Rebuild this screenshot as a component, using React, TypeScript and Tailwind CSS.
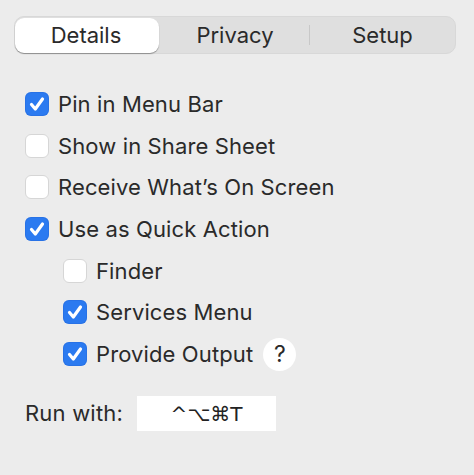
import { ReactNode } from "react";

function Check({ checked }: { checked?: boolean }) {
    if (checked) {
        return (
            <span className="flex h-[24px] w-[24px] shrink-0 items-center justify-center rounded-[6px] bg-[#2b7af0] shadow-[inset_0_0_0_1px_rgba(30,90,200,0.25)]">
                <svg width="18" height="18" viewBox="0 0 18 18" fill="none">
                    <path d="M3.5 9.5L7.3 14L14.5 4" stroke="white" strokeWidth="3.2" strokeLinecap="round" strokeLinejoin="round" />
                </svg>
            </span>
        );
    }
    return <span className="h-[24px] w-[24px] shrink-0 rounded-[6px] border border-[#d6d6d6] bg-white" />;
}

function Row({ checked, indent, children }: { checked?: boolean; indent?: boolean; children: ReactNode }) {
    return (
        <div className={indent ? "flex h-[24px] items-center gap-[9px] pl-[38px]" : "flex h-[24px] items-center gap-[9px]"}>
            <Check checked={checked} />
            <span className="text-[22px] leading-none tracking-[0.12px] whitespace-nowrap">{children}</span>
        </div>
    );
}

export default function App() {
    return (
        <div className="h-[475px] w-[474px] overflow-hidden bg-[#ececec] pt-[16px] pl-[14px] font-['Inter',sans-serif] text-[#2a2a2a]">
            <div className="flex h-[38px] w-[442px] items-center rounded-[10px] border border-[#d8d8d8] bg-[#dfdfdf] text-[22px]">
                <div className="flex h-[35px] w-[144px] items-center justify-center rounded-[9px] bg-white pr-[2px] shadow-[0_1px_1px_rgba(0,0,0,0.35)]">Details</div>
                <div className="flex h-[35px] w-[150px] items-center justify-center pl-[2px]">Privacy</div>
                <div className="h-[20px] w-[1px] bg-[#c8c8c8]" />
                <div className="flex h-[35px] flex-1 items-center justify-center">Setup</div>
            </div>
            <div className="mt-[38px] flex flex-col gap-[17.7px] pl-[11px]">
                <Row checked>Pin in Menu Bar</Row>
                <Row>Show in Share Sheet</Row>
                <Row>Receive What’s On Screen</Row>
                <Row checked>Use as Quick Action</Row>
                <Row indent>Finder</Row>
                <Row checked indent>Services Menu</Row>
                <div className="flex items-center gap-[10px]">
                    <Row checked indent>Provide Output</Row>
                    <span className="my-[-5px] flex h-[33px] w-[33px] items-center justify-center rounded-full bg-white text-[23px]">?</span>
                </div>
            </div>
            <div className="mt-[30px] flex items-center gap-[14px] pl-[11px]">
                <span className="text-[22px] tracking-[0.2px] whitespace-nowrap">Run with:</span>
                <div className="flex h-[35px] w-[139px] items-center justify-center bg-white font-['DejaVu_Sans',sans-serif] text-[20px] text-[#222222]">^⌥⌘T</div>
            </div>
        </div>
    );
}
